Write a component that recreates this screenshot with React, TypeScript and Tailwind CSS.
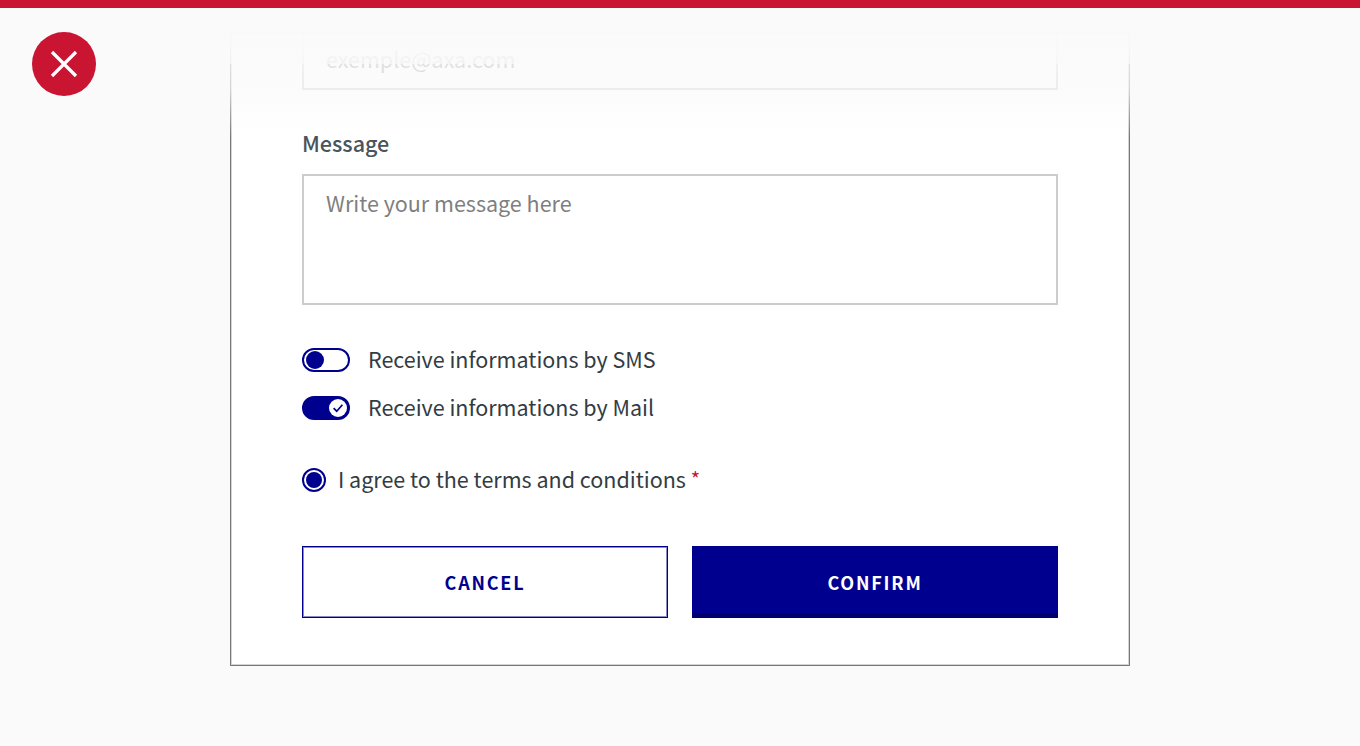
import React from 'react';

const font = "font-['Noto_Sans_CJK_SC','Noto_Sans',sans-serif]";

const Toggle = ({ on, label }: { on: boolean; label: string }) => (
  <div className="flex items-center h-6">
    <span
      className={`w-12 h-6 rounded-full border-2 border-[#00008f] flex items-center px-[2px] ${
        on ? 'bg-[#00008f] justify-end' : 'bg-white justify-start'
      }`}
    >
      {on ? (
        <span className="w-[18px] h-[18px] mr-[-1px] rounded-full bg-white flex items-center justify-center">
          <svg width="14" height="14" viewBox="0 0 14 14" fill="none">
            <path d="M2.6 7.2 L5.7 10.2 L11.4 3.8" stroke="#00008f" strokeWidth="1.7" />
          </svg>
        </span>
      ) : (
        <span className="w-[18px] h-[18px] rounded-full bg-[#00008f]" />
      )}
    </span>
    <span className="ml-[18px] text-[21.5px] leading-6 -translate-y-px text-[#333c42]">{label}</span>
  </div>
);

const App: React.FC = () => {
  return (
    <div className={`${font} relative h-[746px] w-full overflow-hidden bg-[#fafafa]`}>
      <div className="h-2 bg-[#c91432]" />

      <button className="absolute left-8 top-8 w-16 h-16 rounded-full bg-[#c91432] flex items-center justify-center">
        <svg width="28" height="28" viewBox="0 0 28 28" fill="none">
          <path d="M2 2 L26 26 M26 2 L2 26" stroke="white" strokeWidth="3.2" />
        </svg>
      </button>

      <div className="flex justify-center pt-6">
        <div className="relative w-[900px] h-[634px]">
          <div className="h-full overflow-hidden bg-white border border-[#777777] shadow-[inset_0_0_0_1px_#d4d4d4] flex flex-col justify-end px-[71px] pb-[47px]">
            <div className="shrink-0 h-[60px] border-2 border-[#cccccc] flex items-center px-[22px] text-[21.5px] text-[#7f7f7f]">
              <span className="-translate-y-px">exemple@axa.com</span>
            </div>

            <label className="shrink-0 mt-[38px] h-[30px] text-[21.5px] leading-[30px] font-medium text-[#4a545a]">Message</label>
            <div className="mt-4 shrink-0 h-[131px] border-2 border-[#cccccc] px-[22px] pt-[13px] text-[21.5px] leading-[28px] text-[#7f7f7f]">
              Write your message here
            </div>

            <div className="shrink-0 mt-[43px] flex flex-col gap-6">
              <Toggle on={false} label="Receive informations by SMS" />
              <Toggle on label="Receive informations by Mail" />
            </div>

            <div className="shrink-0 mt-12 flex items-center h-6">
              <span className="w-6 h-6 rounded-full border-2 border-[#00008f] flex items-center justify-center">
                <span className="w-4 h-4 rounded-full bg-[#00008f]" />
              </span>
              <span className="ml-3 text-[21.5px] leading-6 -translate-y-px text-[#333c42]">I agree to the terms and conditions</span>
              <span className="ml-[5px] text-[20px] leading-6 -translate-y-px text-[#c91432]">*</span>
            </div>

            <div className="shrink-0 mt-[54px] grid grid-cols-2 gap-6">
              <button className="h-[72px] border border-[#00008f] shadow-[inset_0_0_0_1px_#8a8ac8] bg-white text-[#00008f] text-[18px] font-semibold tracking-[0.1em]">
                CANCEL
              </button>
              <button className="h-[72px] bg-[#00008f] shadow-[inset_0_-5px_0_#00006e] text-white text-[18px] font-semibold tracking-[0.1em]">
                CONFIRM
              </button>
            </div>
          </div>

          {/* fade over the scrolled content, sits above the modal border */}
          <div className="absolute inset-x-0 top-0 h-[105px] bg-[linear-gradient(to_bottom,rgba(250,250,250,0.99)_0px,rgba(250,250,250,0.93)_32px,rgba(250,250,250,0.8)_32px,rgba(250,250,250,0.7)_58px,rgba(250,250,250,0)_105px)]" />
        </div>
      </div>
    </div>
  );
};

export default App;
